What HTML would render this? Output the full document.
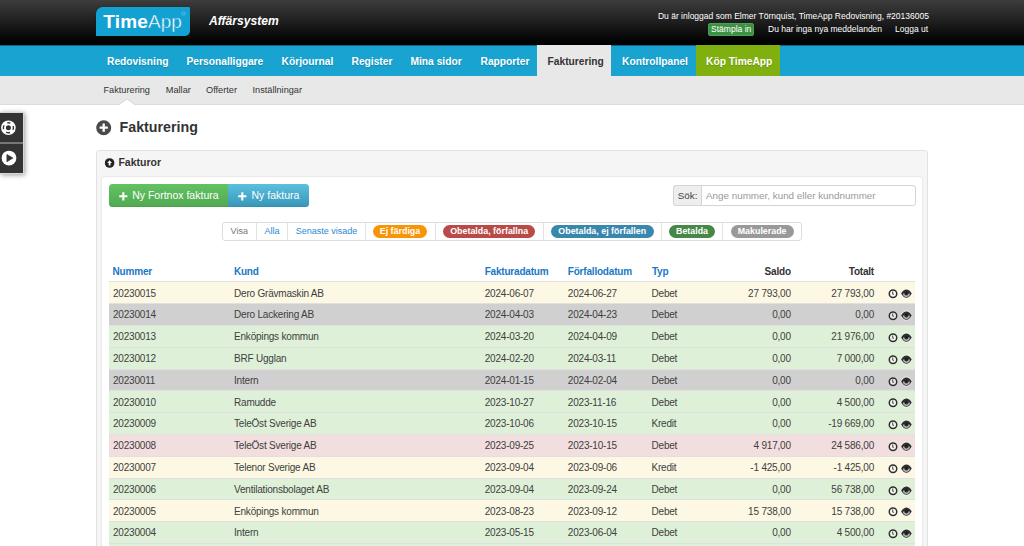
<!DOCTYPE html>
<html><head><meta charset="utf-8">
<style>
*{box-sizing:border-box;margin:0;padding:0}
html,body{width:1024px;height:546px;overflow:hidden;background:#fff}
body{font-family:"Liberation Sans",sans-serif;color:#333;position:relative}
.a{position:absolute;white-space:nowrap}
#hdr{position:absolute;left:0;top:0;width:1024px;height:45px;background:linear-gradient(#3d3d3d,#000 96%)}
#logo{position:absolute;left:96px;top:7.3px;width:93.5px;height:29px;background:#13a1d1;border-radius:6.5px 1px 5px 0;box-shadow:0 0 1px rgba(0,0,0,.6)}
#nav{position:absolute;left:0;top:45px;width:1024px;height:30.5px;background:#18a3d0;border-top:1px solid #0e6482}
#sub{position:absolute;left:0;top:75.5px;width:1024px;height:29px;background:#e8e8e8;border-bottom:1px solid #dcdcdc}
.nv{position:absolute;top:47px;height:30.5px;line-height:30.5px;font-size:10.24px;font-weight:bold;color:#fff;white-space:nowrap;text-shadow:0 1px 1px rgba(0,0,0,.18)}
.sn{position:absolute;top:75.5px;height:29px;line-height:29px;font-size:9.2px;color:#333;white-space:nowrap}

.dv{top:222px;width:1px;height:19px;background:#e2e2e2}
.fl{top:226.2px;font-size:9.03px;line-height:10px}
.bd{top:225px;height:13.2px;border-radius:6.6px;color:#fff;font-size:8.9px;line-height:13.2px;font-weight:bold;text-align:center;white-space:nowrap}
.th{position:absolute;top:265.8px;font-size:10px;letter-spacing:-0.2px;line-height:11px;font-weight:bold;white-space:nowrap}
.tr{position:absolute;left:109px;width:806.2px;height:21.8px;border-top:1px solid #e0e0e0}
.tr span{position:absolute;top:5.3px;font-size:10px;letter-spacing:-0.2px;line-height:11px;color:#404040;white-space:nowrap}
.tr .ic{position:absolute;left:779.3px;top:5.1px;width:26px;height:12px;overflow:visible}
.y{background:#fcf8e3}.g{background:#d0d0d0}.s{background:#dff0d8}.d{background:#f2dede}
</style></head>
<body>
<div id="hdr"></div>
<div id="logo"></div>
<div class="a" style="left:103.2px;top:11px;font-size:19px;line-height:22px;color:#fff;font-weight:bold;letter-spacing:0.2px">Time<span style="font-weight:normal;letter-spacing:0px;-webkit-text-stroke:0.45px #13a1d1">App</span></div>
<svg class="a" style="left:181px;top:10.5px" width="5" height="5" viewBox="0 0 5 5"><circle cx="2.5" cy="2.5" r="1.6" fill="none" stroke="#8fd0ea" stroke-width="0.6"/></svg>
<div class="a" style="left:209px;top:14.2px;font-size:12.1px;line-height:14px;color:#fff;font-weight:bold;font-style:italic">Affärsystem</div>
<div class="a" style="right:95px;top:10.8px;font-size:8.53px;line-height:10px;color:#fff">Du är inloggad som Elmer Törnquist, TimeApp Redovisning, #20136005</div>
<div class="a" style="left:708px;top:22.5px;width:46.3px;height:13.2px;background:#3c9142;border:1px solid #4c9f50;border-radius:2px;color:#fff;font-size:8.53px;line-height:10.6px;text-align:center">Stämpla in</div>
<div class="a" style="left:768px;top:23.5px;font-size:8.53px;line-height:10px;color:#fff">Du har inga nya meddelanden</div>
<div class="a" style="left:895px;top:23.5px;font-size:8.53px;line-height:10px;color:#fff">Logga ut</div>

<div id="nav"></div>
<div class="nv" style="left:107px">Redovisning</div>
<div class="nv" style="left:186.5px">Personalliggare</div>
<div class="nv" style="left:281.5px">Körjournal</div>
<div class="nv" style="left:351.5px">Register</div>
<div class="nv" style="left:410.5px">Mina sidor</div>
<div class="nv" style="left:480.5px">Rapporter</div>
<div class="a" style="left:537px;top:45px;width:74px;height:30.5px;background:#e8e8e8"></div>
<div class="nv" style="left:547.5px;color:#333;text-shadow:none">Fakturering</div>
<div class="nv" style="left:622px">Kontrollpanel</div>
<div class="a" style="left:696px;top:45px;width:84.3px;height:30.5px;background:#80b010"></div>
<div class="nv" style="left:706px">Köp TimeApp</div>

<div id="sub"></div>
<svg class="a" style="left:117px;top:97px" width="20" height="9" viewBox="0 0 20 9"><path d="M1.6 8.2 L9.9 2.2 L18.2 8.2 Z" fill="#fff"/><path d="M1.6 7.6 L9.9 1.9 L18.2 7.6" fill="none" stroke="#d8d8d8" stroke-width="1"/></svg>
<div class="sn" style="left:103.5px">Fakturering</div>
<div class="sn" style="left:165.8px">Mallar</div>
<div class="sn" style="left:206px">Offerter</div>
<div class="sn" style="left:252.5px">Inställningar</div>


<!-- side tab -->
<div class="a" style="left:0;top:112.2px;width:24.3px;height:62px;background:#333;border:1px solid #d8d8d8;border-left:0;box-shadow:1px 1px 5px rgba(0,0,0,.4)"></div>
<div class="a" style="left:0;top:141.6px;width:23.3px;height:2.2px;background:#777"></div>
<svg class="a" style="left:0;top:119px" width="18" height="18" viewBox="0 0 18 18">
 <circle cx="8.4" cy="8.75" r="7.3" fill="#fff"/>
 <circle cx="8.4" cy="8.75" r="2.5" fill="#333"/>
 <circle cx="8.4" cy="8.75" r="5" fill="none" stroke="#333" stroke-width="1.35" stroke-dasharray="4.1 3.75" stroke-dashoffset="2.05" transform="rotate(-90 8.4 8.75)"/>
</svg>
<svg class="a" style="left:0;top:149px" width="18" height="18" viewBox="0 0 18 18">
 <circle cx="9" cy="9.1" r="7.4" fill="#fff"/>
 <path d="M6.9 5.4 L13 9.1 L6.9 12.8 Z" fill="#333" stroke="#333" stroke-width="0.6" stroke-linejoin="round"/>
</svg>

<!-- title -->
<svg class="a" style="left:96px;top:119.5px" width="16" height="16" viewBox="0 0 16 16">
 <circle cx="7.7" cy="7.7" r="7.5" fill="#4a4a4a"/>
 <path d="M7.7 3.6 V11.8 M3.6 7.7 H11.8" stroke="#fff" stroke-width="2.3"/>
</svg>
<div class="a" style="left:119.5px;top:119.2px;font-size:14.25px;line-height:17px;font-weight:bold;color:#333">Fakturering</div>

<!-- outer panel -->
<div class="a" style="left:96px;top:150px;width:831.8px;height:420px;background:#f5f5f5;border:1px solid #e2e2e2;border-radius:3px"></div>
<svg class="a" style="left:104px;top:157px" width="12" height="12" viewBox="0 0 12 12">
 <circle cx="5.6" cy="6" r="4.8" fill="#222"/>
 <path d="M5.6 3.3 L8 5.9 H6.5 V8.5 H4.7 V5.9 H3.2 Z" fill="#fff"/>
</svg>
<div class="a" style="left:118.4px;top:156px;font-size:10.5px;line-height:12px;font-weight:bold;color:#333">Fakturor</div>

<!-- inner panel -->
<div class="a" style="left:100.6px;top:176.1px;width:822.6px;height:400px;background:#fff;border:1px solid #e9e9e9;border-radius:3px"></div>

<!-- buttons -->
<div class="a btn" style="left:108.6px;top:184.2px;width:119.8px;height:22.6px;background:linear-gradient(#62c262,#51a951);border-radius:3.5px 0 0 3.5px;box-shadow:inset 0 -1px 0 rgba(0,0,0,.06)"></div>
<div class="a btn" style="left:228.4px;top:184.2px;width:80.4px;height:22.6px;background:linear-gradient(#5bc0de,#3796b9);border-radius:0 3.5px 3.5px 0;box-shadow:inset 0 -1px 0 rgba(0,0,0,.06)"></div>
<svg class="a" style="left:118.9px;top:191.8px" width="9" height="9" viewBox="0 0 9 9"><path d="M4.3 0.2 V8.4 M0.2 4.3 H8.4" stroke="#fff" stroke-width="2.1"/></svg>
<div class="a" style="left:132.2px;top:189px;font-size:10.5px;line-height:12px;color:#fff">Ny Fortnox faktura</div>
<svg class="a" style="left:238.2px;top:191.8px" width="9" height="9" viewBox="0 0 9 9"><path d="M4.3 0.2 V8.4 M0.2 4.3 H8.4" stroke="#fff" stroke-width="2.1"/></svg>
<div class="a" style="left:251.5px;top:189px;font-size:10.5px;line-height:12px;color:#fff">Ny faktura</div>

<!-- search -->
<div class="a" style="left:673.1px;top:184.6px;width:242.6px;height:21.8px;border:1px solid #d4d4d4;border-radius:3px;background:#fff"></div>
<div class="a" style="left:673.1px;top:184.6px;width:28.5px;height:21.8px;border:1px solid #d4d4d4;border-radius:3px 0 0 3px;background:#eee"></div>
<div class="a" style="left:677.8px;top:190px;font-size:9.85px;line-height:12px;color:#444">Sök:</div>
<div class="a" style="left:706px;top:190px;font-size:9.85px;line-height:12px;color:#999">Ange nummer, kund eller kundnummer</div>

<!-- filter group -->
<div class="a" style="left:222.1px;top:222px;width:579.5px;height:19px;border:1px solid #ddd;border-radius:3px;background:#fff"></div>
<div class="a dv" style="left:256.4px"></div>
<div class="a dv" style="left:287.3px"></div>
<div class="a dv" style="left:364.8px"></div>
<div class="a dv" style="left:434.8px"></div>
<div class="a dv" style="left:542.9px"></div>
<div class="a dv" style="left:660.5px"></div>
<div class="a dv" style="left:722.2px"></div>
<div class="a fl" style="left:230.6px;color:#777">Visa</div>
<div class="a fl" style="left:264.5px;color:#2a8bd0">Alla</div>
<div class="a fl" style="left:295.7px;color:#2a8bd0">Senaste visade</div>
<div class="a bd" style="left:372.6px;width:54.8px;background:#f89406">Ej färdiga</div>
<div class="a bd" style="left:442.9px;width:92.6px;background:#b94a48">Obetalda, förfallna</div>
<div class="a bd" style="left:550.9px;width:102.7px;background:#3a87ad">Obetalda, ej förfallen</div>
<div class="a bd" style="left:669.2px;width:45.7px;background:#468847">Betalda</div>
<div class="a bd" style="left:730.5px;width:63.3px;background:#999">Makulerade</div>

<!-- table -->
<div id="tbl">
<div class="th" style="left:112.6px;color:#1878c6">Nummer</div>
<div class="th" style="left:233.9px;color:#1878c6">Kund</div>
<div class="th" style="left:484.7px;color:#1878c6">Fakturadatum</div>
<div class="th" style="left:567.8px;color:#1878c6">Förfallodatum</div>
<div class="th" style="left:651.9px;color:#1878c6">Typ</div>
<div class="th" style="right:233.2px;color:#333">Saldo</div>
<div class="th" style="right:150px;color:#333">Totalt</div>

<div class="tr y" style="top:281.40px"><span style="left:4px">20230015</span><span style="left:125px">Dero Grävmaskin AB</span><span style="left:375.7px">2024-06-07</span><span style="left:458.8px">2024-06-27</span><span style="left:542.5px">Debet</span><span class="r" style="right:124.4px">27 793,00</span><span class="r" style="right:41.2px">27 793,00</span><svg class="ic" width="26" height="12" viewBox="0 0 26 12"><use href="#clk"/><use href="#eye" x="13.4"/></svg></div>
<div class="tr g" style="top:303.20px"><span style="left:4px">20230014</span><span style="left:125px">Dero Lackering AB</span><span style="left:375.7px">2024-04-03</span><span style="left:458.8px">2024-04-23</span><span style="left:542.5px">Debet</span><span class="r" style="right:124.4px">0,00</span><span class="r" style="right:41.2px">0,00</span><svg class="ic" width="26" height="12" viewBox="0 0 26 12"><use href="#clk"/><use href="#eye" x="13.4"/></svg></div>
<div class="tr s" style="top:325.00px"><span style="left:4px">20230013</span><span style="left:125px">Enköpings kommun</span><span style="left:375.7px">2024-03-20</span><span style="left:458.8px">2024-04-09</span><span style="left:542.5px">Debet</span><span class="r" style="right:124.4px">0,00</span><span class="r" style="right:41.2px">21 976,00</span><svg class="ic" width="26" height="12" viewBox="0 0 26 12"><use href="#clk"/><use href="#eye" x="13.4"/></svg></div>
<div class="tr s" style="top:346.80px"><span style="left:4px">20230012</span><span style="left:125px">BRF Ugglan</span><span style="left:375.7px">2024-02-20</span><span style="left:458.8px">2024-03-11</span><span style="left:542.5px">Debet</span><span class="r" style="right:124.4px">0,00</span><span class="r" style="right:41.2px">7 000,00</span><svg class="ic" width="26" height="12" viewBox="0 0 26 12"><use href="#clk"/><use href="#eye" x="13.4"/></svg></div>
<div class="tr g" style="top:368.60px"><span style="left:4px">20230011</span><span style="left:125px">Intern</span><span style="left:375.7px">2024-01-15</span><span style="left:458.8px">2024-02-04</span><span style="left:542.5px">Debet</span><span class="r" style="right:124.4px">0,00</span><span class="r" style="right:41.2px">0,00</span><svg class="ic" width="26" height="12" viewBox="0 0 26 12"><use href="#clk"/><use href="#eye" x="13.4"/></svg></div>
<div class="tr s" style="top:390.40px"><span style="left:4px">20230010</span><span style="left:125px">Ramudde</span><span style="left:375.7px">2023-10-27</span><span style="left:458.8px">2023-11-16</span><span style="left:542.5px">Debet</span><span class="r" style="right:124.4px">0,00</span><span class="r" style="right:41.2px">4 500,00</span><svg class="ic" width="26" height="12" viewBox="0 0 26 12"><use href="#clk"/><use href="#eye" x="13.4"/></svg></div>
<div class="tr s" style="top:412.20px"><span style="left:4px">20230009</span><span style="left:125px">TeleÖst Sverige AB</span><span style="left:375.7px">2023-10-06</span><span style="left:458.8px">2023-10-15</span><span style="left:542.5px">Kredit</span><span class="r" style="right:124.4px">0,00</span><span class="r" style="right:41.2px">-19 669,00</span><svg class="ic" width="26" height="12" viewBox="0 0 26 12"><use href="#clk"/><use href="#eye" x="13.4"/></svg></div>
<div class="tr d" style="top:434.00px"><span style="left:4px">20230008</span><span style="left:125px">TeleÖst Sverige AB</span><span style="left:375.7px">2023-09-25</span><span style="left:458.8px">2023-10-15</span><span style="left:542.5px">Debet</span><span class="r" style="right:124.4px">4 917,00</span><span class="r" style="right:41.2px">24 586,00</span><svg class="ic" width="26" height="12" viewBox="0 0 26 12"><use href="#clk"/><use href="#eye" x="13.4"/></svg></div>
<div class="tr y" style="top:455.80px"><span style="left:4px">20230007</span><span style="left:125px">Telenor Sverige AB</span><span style="left:375.7px">2023-09-04</span><span style="left:458.8px">2023-09-06</span><span style="left:542.5px">Kredit</span><span class="r" style="right:124.4px">-1 425,00</span><span class="r" style="right:41.2px">-1 425,00</span><svg class="ic" width="26" height="12" viewBox="0 0 26 12"><use href="#clk"/><use href="#eye" x="13.4"/></svg></div>
<div class="tr s" style="top:477.60px"><span style="left:4px">20230006</span><span style="left:125px">Ventilationsbolaget AB</span><span style="left:375.7px">2023-09-04</span><span style="left:458.8px">2023-09-24</span><span style="left:542.5px">Debet</span><span class="r" style="right:124.4px">0,00</span><span class="r" style="right:41.2px">56 738,00</span><svg class="ic" width="26" height="12" viewBox="0 0 26 12"><use href="#clk"/><use href="#eye" x="13.4"/></svg></div>
<div class="tr y" style="top:499.40px"><span style="left:4px">20230005</span><span style="left:125px">Enköpings kommun</span><span style="left:375.7px">2023-08-23</span><span style="left:458.8px">2023-09-12</span><span style="left:542.5px">Debet</span><span class="r" style="right:124.4px">15 738,00</span><span class="r" style="right:41.2px">15 738,00</span><svg class="ic" width="26" height="12" viewBox="0 0 26 12"><use href="#clk"/><use href="#eye" x="13.4"/></svg></div>
<div class="tr s" style="top:521.20px"><span style="left:4px">20230004</span><span style="left:125px">Intern</span><span style="left:375.7px">2023-05-15</span><span style="left:458.8px">2023-06-04</span><span style="left:542.5px">Debet</span><span class="r" style="right:124.4px">0,00</span><span class="r" style="right:41.2px">4 500,00</span><svg class="ic" width="26" height="12" viewBox="0 0 26 12"><use href="#clk"/><use href="#eye" x="13.4"/></svg></div>
<div class="tr s" style="top:543.00px"><span style="left:4px">20230003</span><span style="left:125px"></span><span style="left:375.7px"></span><span style="left:458.8px"></span><span style="left:542.5px"></span><span class="r" style="right:124.4px"></span><span class="r" style="right:41.2px"></span><svg class="ic" width="26" height="12" viewBox="0 0 26 12"><use href="#clk"/><use href="#eye" x="13.4"/></svg></div>
</div>
<svg width="0" height="0" style="position:absolute">
 <defs>
  <g id="clk"><circle cx="5" cy="6.7" r="4.7" fill="#fff" fill-opacity=".5"/><circle cx="5" cy="6.7" r="3.75" fill="none" stroke="#2e2e2e" stroke-width="1.5"/><path d="M4.7 4.4 V6.9 L5.9 7.5" fill="none" stroke="#555" stroke-width="1.1"/></g>
  <g id="eye"><path d="M-1 6.6 C2.2 -0.4 7.8 -0.4 11 6.6 C7.8 13.6 2.2 13.6 -1 6.6 Z" fill="#fff" fill-opacity=".45"/><path d="M-0.3 6.6 C2.6 1 7.4 1 10.3 6.6 C7.4 12.2 2.6 12.2 -0.3 6.6 Z" fill="#2e2e2e"/><path d="M2.2 6.5 A2.8 2.8 0 0 0 7.8 6.5" fill="none" stroke="#b4b4b4" stroke-width="1.4"/><circle cx="5" cy="5.9" r="1.15" fill="#1a1a1a"/></g>
 </defs>
</svg>
</body></html>
